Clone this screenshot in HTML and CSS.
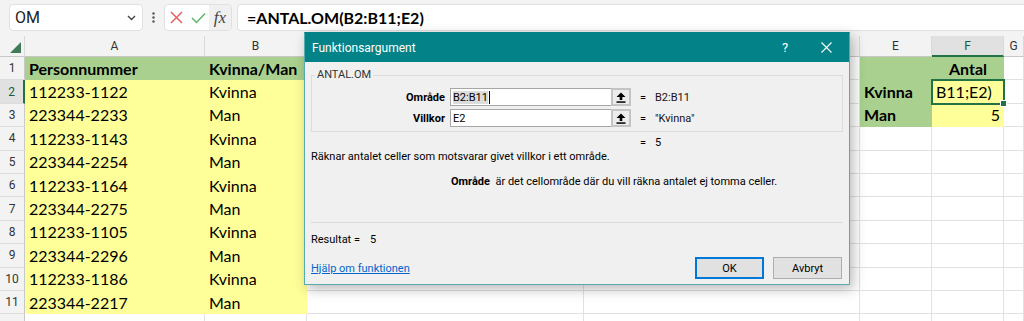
FILE: index.html
```html
<!DOCTYPE html>
<html lang="sv">
<head>
    <meta charset="UTF-8">
    <meta name="viewport" content="width=device-width, initial-scale=1.0">
    <title>Funktionsargument</title>
    <link rel="stylesheet" href="styles.css">
</head>
<body>
<div class="app">
    <!-- formula bar -->
    <div class="formula-bar">
        <div class="name-box">
            <span>OM</span>
            <svg width="9" height="6" viewBox="0 0 9 6"><path d="M1 1 L4.5 4.5 L8 1" fill="none" stroke="#444" stroke-width="1.4"/></svg>
        </div>
        <div class="dots">
            <svg width="3" height="11" viewBox="0 0 3 11"><circle cx="1.5" cy="1.5" r="1.2" fill="#555"/><circle cx="1.5" cy="5.5" r="1.2" fill="#555"/><circle cx="1.5" cy="9.5" r="1.2" fill="#555"/></svg>
        </div>
        <div class="fx-box">
            <span class="fx-cancel"><svg width="13" height="13" viewBox="0 0 13 13"><path d="M1 1 L12 12 M12 1 L1 12" stroke="#e3605f" stroke-width="1.5"/></svg></span>
            <span class="fx-enter"><svg width="15" height="12" viewBox="0 0 15 12"><path d="M1 6 L5.5 10.5 L14 1.5" fill="none" stroke="#5eb566" stroke-width="1.5"/></svg></span>
            <span class="fx-fn">fx</span>
        </div>
        <div class="formula-input">=ANTAL.OM(B2:B11;E2)</div>
    </div>

    <!-- sheet -->
    <div class="sheet">
        <div class="h corner"><svg width="25" height="21" viewBox="0 0 25 21"><polygon points="21,6 21,17 10,17" fill="#3f7b55"/></svg></div>
        <div class="h">A</div><div class="h">B</div><div class="h">C</div><div class="h">D</div><div class="h">E</div><div class="h hs">F</div><div class="h">G</div>

        <div class="rh">1</div><div class="c g b">Personnummer</div><div class="c g b">Kvinna/Man</div><div class="c"></div><div class="c"></div><div class="c g"></div><div class="c g b ctr">Antal</div><div class="c"></div>
        <div class="rh rs">2</div><div class="c y">112233-1122</div><div class="c y">Kvinna</div><div class="c"></div><div class="c"></div><div class="c g b">Kvinna</div><div class="c y active">B11;E2)</div><div class="c"></div>
        <div class="rh">3</div><div class="c y">223344-2233</div><div class="c y">Man</div><div class="c"></div><div class="c"></div><div class="c g b">Man</div><div class="c y r">5</div><div class="c"></div>
        <div class="rh">4</div><div class="c y">112233-1143</div><div class="c y">Kvinna</div><div class="c"></div><div class="c"></div><div class="c"></div><div class="c"></div><div class="c"></div>
        <div class="rh">5</div><div class="c y">223344-2254</div><div class="c y">Man</div><div class="c"></div><div class="c"></div><div class="c"></div><div class="c"></div><div class="c"></div>
        <div class="rh">6</div><div class="c y">112233-1164</div><div class="c y">Kvinna</div><div class="c"></div><div class="c"></div><div class="c"></div><div class="c"></div><div class="c"></div>
        <div class="rh">7</div><div class="c y">223344-2275</div><div class="c y">Man</div><div class="c"></div><div class="c"></div><div class="c"></div><div class="c"></div><div class="c"></div>
        <div class="rh">8</div><div class="c y">112233-1105</div><div class="c y">Kvinna</div><div class="c"></div><div class="c"></div><div class="c"></div><div class="c"></div><div class="c"></div>
        <div class="rh">9</div><div class="c y">223344-2296</div><div class="c y">Man</div><div class="c"></div><div class="c"></div><div class="c"></div><div class="c"></div><div class="c"></div>
        <div class="rh">10</div><div class="c y">112233-1186</div><div class="c y">Kvinna</div><div class="c"></div><div class="c"></div><div class="c"></div><div class="c"></div><div class="c"></div>
        <div class="rh">11</div><div class="c y">223344-2217</div><div class="c y">Man</div><div class="c"></div><div class="c"></div><div class="c"></div><div class="c"></div><div class="c"></div>
        <div class="rh"></div><div class="c"></div><div class="c"></div><div class="c"></div><div class="c"></div><div class="c"></div><div class="c"></div><div class="c"></div>
    </div>

    <!-- Funktionsargument dialog -->
    <div class="dialog">
        <div class="dlg-title">
            <span>Funktionsargument</span>
            <span class="dlg-help">?</span>
            <span class="dlg-close"><svg width="11" height="11" viewBox="0 0 11 11"><path d="M0.5 0.5 L10.5 10.5 M10.5 0.5 L0.5 10.5" stroke="#fff" stroke-width="1.1"/></svg></span>
        </div>
        <div class="dlg-body">
            <fieldset class="args">
                <legend>ANTAL.OM</legend>
                <div class="arg-row">
                    <label>Område</label>
                    <div class="arg-input"><span class="sel">B2:B11</span><span class="caret"></span></div>
                    <button class="collapse"><svg width="10" height="11" viewBox="0 0 10 11"><path d="M5 0.5 L9.5 5 H6.3 V8 H3.7 V5 H0.5 Z" fill="#000"/><rect x="0.5" y="9.3" width="9" height="1.5" fill="#000"/></svg></button>
                    <span class="eq">=</span>
                    <span class="val">B2:B11</span>
                </div>
                <div class="arg-row">
                    <label>Villkor</label>
                    <div class="arg-input">E2</div>
                    <button class="collapse"><svg width="10" height="11" viewBox="0 0 10 11"><path d="M5 0.5 L9.5 5 H6.3 V8 H3.7 V5 H0.5 Z" fill="#000"/><rect x="0.5" y="9.3" width="9" height="1.5" fill="#000"/></svg></button>
                    <span class="eq">=</span>
                    <span class="val">"Kvinna"</span>
                </div>
            </fieldset>
            <div class="fn-result"><span class="eq">=</span><span>5</span></div>
            <p class="fn-desc">Räknar antalet celler som motsvarar givet villkor i ett område.</p>
            <p class="arg-desc"><b>Område</b>&nbsp;&nbsp;är det cellområde där du vill räkna antalet ej tomma celler.</p>
            <hr class="sep">
            <div class="result">Resultat =<span class="result-val">5</span></div>
            <div class="dlg-footer">
                <a href="#" class="help-link">Hjälp om funktionen</a>
                <button class="btn btn-ok">OK</button>
                <button class="btn">Avbryt</button>
            </div>
        </div>
    </div>
</div>
</body>
</html>
```

FILE: styles.css
```css
body {
    margin: 0;
    background: #fff;
    font-family: Roboto, "Noto Sans", sans-serif;
}
.app {
    position: relative;
    width: 1024px;
    height: 321px;
    overflow: hidden;
}

/* formula bar */
.formula-bar {
    display: flex;
    align-items: center;
    height: 36px;
    padding: 4px 0 5px 9px;
    box-sizing: border-box;
    background: #f3f3f3;
}
.name-box {
    display: flex;
    align-items: center;
    justify-content: space-between;
    width: 134px;
    height: 27px;
    padding: 0 6px 0 5px;
    box-sizing: border-box;
    background: #fff;
    border: 1px solid #e1e1e1;
    border-radius: 4px;
    font-size: 16px;
    color: #222;
}
.dots {
    display: flex;
    justify-content: center;
    width: 21px;
}
.fx-box {
    display: flex;
    width: 68px;
    height: 27px;
    box-sizing: border-box;
    background: #fff;
    border: 1px solid #e1e1e1;
    border-radius: 4px;
}
.fx-box span {
    display: flex;
    align-items: center;
    justify-content: center;
    width: 22px;
}
.fx-fn {
    background: #f0f0f0;
    border-radius: 0 3px 3px 0;
    font-family: "Liberation Serif", serif;
    font-style: italic;
    font-size: 17px;
    color: #444;
}
.formula-input {
    flex: 1;
    display: flex;
    align-items: center;
    height: 27px;
    margin-left: 5px;
    padding-left: 9px;
    box-sizing: border-box;
    background: #fff;
    border: 1px solid #e1e1e1;
    border-right: 0;
    border-radius: 4px 0 0 4px;
    font-family: Lato, "Open Sans", sans-serif;
    font-weight: bold;
    font-size: 16px;
    color: #000;
}

/* sheet grid */
.sheet {
    display: grid;
    grid-template-columns: 25px 180px 102px 277px 276px 72px 72px 1fr;
    grid-template-rows: 21px repeat(12, 23.4px);
    font-family: Lato, "Open Sans", sans-serif;
    font-size: 16px;
}
.h, .rh {
    display: flex;
    align-items: center;
    justify-content: center;
    box-sizing: border-box;
    background: #f3f3f3;
    font-family: Roboto, sans-serif;
    font-size: 12px;
    color: #333;
}
.h {
    border-right: 1px solid #d9d9d9;
    border-bottom: 1px solid #c8c8c8;
}
.rh {
    border-right: 1px solid #c8c8c8;
    border-bottom: 1px solid #dedede;
}
.corner {
    display: block;
}
.corner svg {
    display: block;
}
.hs {
    background: #e1e1e1;
    border-bottom: 2px solid #217346;
    color: #1a5c38;
}
.rs {
    background: #e1e1e1;
    border-right: 2px solid #217346;
    color: #1a5c38;
}
.c {
    display: flex;
    align-items: center;
    padding: 0 3px 0 4px;
    box-sizing: border-box;
    border-right: 1px solid #e1e1e1;
    border-bottom: 1px solid #e1e1e1;
    white-space: nowrap;
    overflow: hidden;
    color: #000;
}
.g {
    background: #a9d08e;
    border-color: transparent;
}
.y {
    background: #ffff99;
    border-color: transparent;
}
.b {
    font-weight: bold;
}
.ctr {
    justify-content: center;
}
.r {
    justify-content: flex-end;
}
.active {
    position: relative;
    overflow: visible;
    outline: 2px solid #217346;
    outline-offset: -1px;
}
.active::after {
    content: "";
    position: absolute;
    right: -4px;
    bottom: -4px;
    width: 5px;
    height: 5px;
    background: #217346;
    border: 1px solid #fff;
}

/* dialog */
.dialog {
    position: absolute;
    left: 304px;
    top: 32px;
    width: 546px;
    height: 253px;
    box-sizing: border-box;
    background: #f0f0f0;
    border: 1px solid #56acac;
    border-top-color: #038387;
    box-shadow: 3px 4px 12px rgba(0, 0, 0, 0.28);
    font-size: 11px;
    color: #000;
}
.dlg-title {
    display: flex;
    align-items: center;
    height: 29px;
    padding: 0 3px 0 7px;
    background: #038387;
    color: #fff;
    font-size: 12px;
}
.dlg-help {
    width: 20px;
    margin-left: auto;
    margin-right: 11px;
    text-align: center;
    font-size: 13px;
}
.dlg-close {
    display: flex;
    justify-content: center;
    width: 40px;
}
.dlg-body {
    padding: 6px 6px 5px 6px;
}
.args {
    margin: 0;
    padding: 0 0 4px 0;
    border: 1px solid #dcdcdc;
}
.args legend {
    margin-left: 3px;
    padding: 0 2px;
    line-height: 14px;
    color: #333;
}
.arg-row {
    display: flex;
    align-items: center;
    height: 18px;
    margin-top: 3px;
}
.arg-row:first-of-type {
    margin-top: 6px;
}
.arg-row label {
    width: 133px;
    margin-right: 5px;
    text-align: right;
    font-weight: bold;
}
.arg-input {
    display: flex;
    align-items: center;
    width: 161px;
    height: 18px;
    padding-left: 2px;
    box-sizing: border-box;
    background: #fff;
    border: 1px solid #a6a6a6;
    border-right: 0;
}
.sel {
    background: #dcdcdc;
}
.caret {
    width: 1px;
    height: 13px;
    margin-left: 1px;
    background: #000;
}
.collapse {
    display: flex;
    align-items: center;
    justify-content: center;
    width: 20px;
    height: 18px;
    padding: 0;
    box-sizing: border-box;
    background: #ececec;
    border: 2px solid #c4c4c4;
}
.eq {
    width: 15px;
    margin-left: 9px;
}
.val {
    color: #201010;
}
.fn-result {
    display: flex;
    height: 14px;
    line-height: 14px;
    margin-top: 4px;
    padding-left: 329px;
}
.fn-result .eq {
    margin-left: 0;
}
.fn-desc {
    margin: 0;
    line-height: 14px;
}
.arg-desc {
    margin: 11px 0 0 0;
    padding-left: 140px;
    line-height: 14px;
}
.sep {
    margin: 33px 0 0 0;
    height: 1px;
    border: 0;
    background: #dcdcdc;
}
.result {
    margin-top: 10px;
    line-height: 14px;
}
.result-val {
    margin-left: 10px;
}
.dlg-footer {
    display: flex;
    align-items: center;
    height: 22px;
    margin: 10px 1px 0 0;
}
.help-link {
    margin-right: auto;
    color: #0066cc;
    text-decoration: underline;
}
.btn {
    width: 69px;
    height: 22px;
    margin-left: 9px;
    padding: 0;
    box-sizing: border-box;
    background: #e1e1e1;
    border: 1px solid #adadad;
    font-family: Roboto, sans-serif;
    font-size: 11px;
    color: #000;
}
.btn-ok {
    border: 2px solid #0078d7;
}
```
